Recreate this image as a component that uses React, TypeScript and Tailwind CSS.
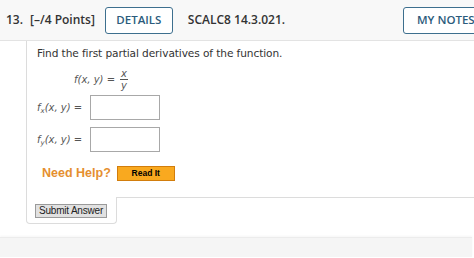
import React from "react";

const App: React.FC = () => {
  return (
    <div className="w-[474px] h-[258px] overflow-hidden bg-white flex flex-col">
      {/* Header */}
      <div className="h-[41px] shrink-0 flex items-center bg-[#f8f8f8] border-b border-[#e3e3e3] font-['Open_Sans',sans-serif] text-[12px] font-semibold text-[#333]">
        <span className="ml-[6px]">13.</span>
        <span className="ml-[7px]">[–/4 Points]</span>
        <button className="ml-[10px] h-[27px] w-[68px] rounded-[3px] border-[1.5px] border-[#3d6f8e] bg-white text-[11.5px] font-semibold text-[#2c5b7c]">
          DETAILS
        </button>
        <span className="ml-[15px]">SCALC8 14.3.021.</span>
        <button className="ml-auto -mr-[8px] h-[27px] w-[79px] shrink-0 rounded-[3px] border-[1.5px] border-[#3d6f8e] bg-white text-[11.5px] font-semibold text-[#2c5b7c] text-left pl-[13px]">
          MY NOTES
        </button>
      </div>

      {/* Question body */}
      <div className="pl-[26px] flex flex-col">
        <div className="border-l border-[#dcdcdc] pl-[10px] pt-[6px] h-[156px] font-['DejaVu_Sans',sans-serif] text-[#333]">
          <p className="text-[10.6px] tracking-[-0.1px] leading-[13px]">
            Find the first partial derivatives of the function.
          </p>

          <div className="ml-[37px] mt-[8px] flex items-center text-[10px] italic text-[#555]">
            <span>f(x, y) =</span>
            <span className="ml-[5px] inline-flex flex-col items-center leading-[11px]">
              <span className="px-[1px] border-b border-[#555]">x</span>
              <span>y</span>
            </span>
          </div>

          <div className="mt-[4px] flex items-center text-[10px] italic text-[#555]">
            <span className="w-[53px]">
              f<sub className="text-[7px]">x</sub>(x, y) =
            </span>
            <div className="w-[70px] h-[25px] border border-[#a8a8a8] bg-white" />
          </div>

          <div className="mt-[7px] flex items-center text-[10px] italic text-[#555]">
            <span className="w-[53px]">
              f<sub className="text-[7px]">y</sub>(x, y) =
            </span>
            <div className="w-[70px] h-[25px] border border-[#a8a8a8] bg-white" />
          </div>

          <div className="mt-[12px] ml-[5px] flex items-center font-['Liberation_Sans',sans-serif]">
            <span className="text-[12.5px] font-bold text-[#e58f2f]">Need Help?</span>
            <button className="ml-[6px] h-[15px] w-[58px] border border-[#d27d0c] bg-[#f9a91f] text-[8.5px] font-bold text-black leading-none">
              Read It
            </button>
          </div>
        </div>

        {/* Submit tab */}
        <div className="flex">
          <div className="w-[91px] h-[27px] flex items-start border-l border-r border-b border-[#dcdcdc] rounded-b-[4px] pl-[8px] pt-[7px]">
            <button className="h-[14px] w-[72px] border border-[#9a9a9a] bg-[#e1e1e1] font-['Liberation_Sans',sans-serif] text-[10px] tracking-[-0.2px] text-[#222] leading-none">
              Submit Answer
            </button>
          </div>
          <div className="flex-1 border-t border-[#dcdcdc]" />
        </div>
      </div>

      {/* Next question strip */}
      <div className="mt-[13px] h-[20px] mr-[2px] bg-[#f5f5f5] border-t border-[#ececec] shadow-[0_-1px_2px_rgba(0,0,0,0.04)]" />
    </div>
  );
};

export default App;
